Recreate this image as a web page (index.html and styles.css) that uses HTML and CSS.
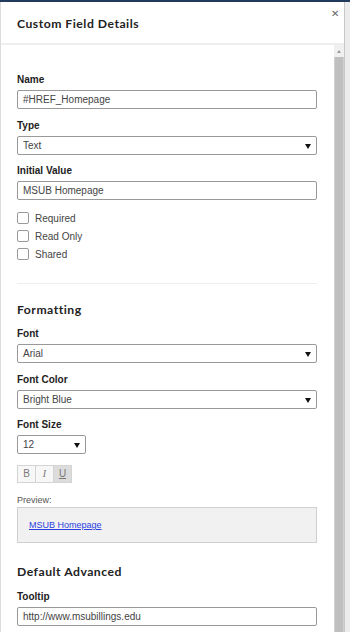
FILE: index.html
```html
<!DOCTYPE html>
<html lang="en">
<head>
    <meta charset="UTF-8">
    <meta name="viewport" content="width=device-width, initial-scale=1.0">
    <title>Custom Field Details</title>
    <link rel="stylesheet" href="styles.css">
</head>
<body>
    <div class="panel">
        <div class="panel-header">
            <h1>Custom Field Details</h1>
            <span class="close">&#x2715;</span>
        </div>
        <div class="panel-main">
            <div class="panel-body">
                <div class="field">
                    <label>Name</label>
                    <div class="box">#HREF_Homepage</div>
                </div>
                <div class="field">
                    <label>Type</label>
                    <div class="box select">Text</div>
                </div>
                <div class="field">
                    <label>Initial Value</label>
                    <div class="box">MSUB Homepage</div>
                </div>
                <div class="checks">
                    <div class="check"><span class="tick"></span>Required</div>
                    <div class="check"><span class="tick"></span>Read Only</div>
                    <div class="check"><span class="tick"></span>Shared</div>
                </div>

                <hr class="divider">

                <h2>Formatting</h2>
                <div class="field">
                    <label>Font</label>
                    <div class="box select">Arial</div>
                </div>
                <div class="field">
                    <label>Font Color</label>
                    <div class="box select">Bright Blue</div>
                </div>
                <div class="field">
                    <label>Font Size</label>
                    <div class="box select small">12</div>
                </div>
                <div class="styles">
                    <span class="sbtn bold">B</span>
                    <span class="sbtn italic">I</span>
                    <span class="sbtn under active">U</span>
                </div>
                <div class="preview-label">Preview:</div>
                <div class="preview">
                    <a href="#">MSUB Homepage</a>
                </div>

                <h2 class="advanced">Default Advanced</h2>
                <div class="field">
                    <label>Tooltip</label>
                    <div class="box">http://www.msubillings.edu</div>
                </div>
            </div>
            <div class="scrollbar">
                <div class="scroll-up"></div>
                <div class="scroll-thumb"></div>
            </div>
        </div>
    </div>
</body>
</html>
```

FILE: styles.css
```css
body {
    margin: 0;
    background-color: #ececec;
    font-family: "Liberation Sans", Arial, sans-serif;
    color: #333;
    height: 632px;
    overflow: hidden;
    border-top: 2px solid #223a5e;
    box-sizing: border-box;
}

.panel {
    width: 345px;
    height: 630px;
    background-color: #fff;
    border-left: 1px solid #dcdcdc;
    border-right: 1px solid #c8c8c8;
    box-sizing: border-box;
    display: flex;
    flex-direction: column;
}

.panel-header {
    height: 41px;
    border-bottom: 2px solid #eeeeee;
    display: flex;
    align-items: center;
    padding-left: 16px;
    position: relative;
    flex-shrink: 0;
}

.panel-header h1 {
    margin: 2px 0 0;
    font-family: Lato, sans-serif;
    font-size: 12.2px;
    font-weight: 700;
    letter-spacing: 0.5px;
    color: #222;
}

.close {
    position: absolute;
    top: 6px;
    right: 5px;
    font-size: 10px;
    color: #666;
}

.panel-main {
    flex: 1;
    display: flex;
    overflow: hidden;
}

.panel-body {
    flex: 1;
    padding: 29px 17px 0 16px;
}

.field {
    margin-bottom: 10.5px;
}

label {
    display: block;
    font-size: 10px;
    font-weight: bold;
    line-height: 12px;
    margin-bottom: 4px;
    color: #222;
}

.box {
    height: 19px;
    border: 1px solid #999;
    border-radius: 2px;
    box-sizing: border-box;
    font-size: 10px;
    line-height: 17px;
    padding-left: 5px;
    color: #444;
    position: relative;
}

.select::after {
    content: "";
    position: absolute;
    right: 5px;
    top: 7px;
    border-left: 3px solid transparent;
    border-right: 3px solid transparent;
    border-top: 5px solid #111;
}

.small {
    width: 69px;
}

.checks {
    margin-top: -1.5px;
}

.check {
    display: flex;
    align-items: center;
    height: 18px;
    font-size: 10px;
    color: #444;
}

.tick {
    width: 12px;
    height: 12px;
    border: 1px solid #999;
    border-radius: 2px;
    box-sizing: border-box;
    margin-right: 6px;
}

.divider {
    border: 0;
    border-top: 1px solid #eeeeee;
    margin: 20px 0 0;
}

h2 {
    margin: 18px 0 10px;
    font-family: Lato, sans-serif;
    font-size: 12.2px;
    font-weight: 700;
    letter-spacing: 0.5px;
    line-height: 16px;
    color: #222;
}

.styles {
    display: flex;
    margin-top: 1px;
}

.sbtn {
    width: 19px;
    height: 18px;
    border: 1px solid #d4d4d4;
    background-color: #f7f7f7;
    box-sizing: border-box;
    margin-right: -1px;
    display: flex;
    align-items: center;
    justify-content: center;
    font-size: 10px;
    color: #777;
}

.italic {
    font-family: "Liberation Serif", serif;
    font-style: italic;
}

.active {
    background-color: #dcdcdc;
    text-decoration: underline;
}

.preview-label {
    font-size: 9px;
    color: #555;
    margin-top: 12.5px;
    line-height: 11px;
}

.preview {
    margin-top: 1px;
    height: 36px;
    background-color: #f1f1f1;
    border: 1px solid #cfcfcf;
    box-sizing: border-box;
    padding-left: 11px;
    display: flex;
    align-items: center;
    font-size: 9px;
}

.preview a {
    color: #2a3fe0;
}

.advanced {
    margin: 21px 0 11px;
}

.scrollbar {
    width: 10px;
    flex-shrink: 0;
    display: flex;
    flex-direction: column;
    background-color: #f0f0f0;
}

.scroll-up {
    height: 12px;
    position: relative;
}

.scroll-up::after {
    content: "";
    position: absolute;
    left: 3px;
    top: 5px;
    border-left: 2px solid transparent;
    border-right: 2px solid transparent;
    border-bottom: 3px solid #999;
}

.scroll-thumb {
    flex: 1;
    background-color: #bfbfbf;
    border-left: 1px solid #d0d0d0;
    border-right: 1px solid #d0d0d0;
}
```
